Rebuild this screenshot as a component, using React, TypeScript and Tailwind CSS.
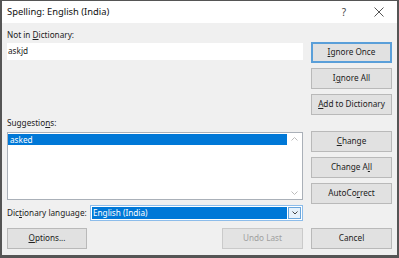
import React from "react";

const font = { fontFamily: '"Noto Sans", "Open Sans", sans-serif' };

function Btn({
  children,
  className = "",
  primary = false,
  disabled = false,
}: {
  children: React.ReactNode;
  className?: string;
  primary?: boolean;
  disabled?: boolean;
}) {
  return (
    <div
      className={
        "h-[21px] flex items-center justify-center text-[8.2px] leading-none whitespace-nowrap " +
        (primary
          ? "bg-[#e1e1e1] border-2 border-[#5a9fd9] text-[#222] "
          : disabled
          ? "bg-[#e3e3e3] border border-[#cacaca] text-[#a0a0a0] "
          : "bg-[#e1e1e1] border border-[#b9b9b9] text-[#222] ") +
        className
      }
    >
      {children}
    </div>
  );
}

export default function App() {
  return (
    <div
      style={font}
      className="w-[399px] h-[258px] border-l-2 border-r-2 border-t border-b-[3px] border-[#555555] flex flex-col text-[#222]"
    >
      {/* Title bar */}
      <div className="h-[22px] bg-white flex items-center pl-[5px] shrink-0">
        <span className="text-[9.4px] leading-none text-[#111] whitespace-nowrap">Spelling: English (India)</span>
        <span className="ml-auto text-[10px] leading-none text-[#444] mr-[28px]">?</span>
        <svg width="10" height="10" viewBox="0 0 10 10" className="mr-[13px]">
          <path d="M0.5 0.5 L9.5 9.5 M9.5 0.5 L0.5 9.5" stroke="#555" strokeWidth="1" />
        </svg>
      </div>

      {/* Body */}
      <div className="flex-1 bg-[#f0f0f0] px-[5px] flex flex-col">
        <div className="flex gap-[8px] h-[198px]">
          {/* Left column */}
          <div className="w-[296px] flex flex-col pt-[6px]">
            <div className="h-[12px] text-[8.2px] leading-[12px] whitespace-nowrap">
              Not in <span className="underline">D</span>ictionary:
            </div>
            <div className="mt-[2px] h-[17px] bg-white text-[8.2px] leading-[15px] pl-[1px]">askjd</div>
            <div className="mt-[57px] h-[12px] text-[8.2px] leading-[12px] whitespace-nowrap">
              Suggestio<span className="underline">n</span>s:
            </div>
            <div className="mt-[3px] h-[68px] bg-white border border-[#aab0b8] flex">
              <div className="flex-1 pt-[1px]">
                <div className="h-[11px] bg-[#0078d7] text-white text-[8.2px] leading-[11px] pl-[2px]">asked</div>
              </div>
              <div className="w-[15px] flex flex-col items-center justify-between py-[4px] bg-white">
                <svg width="7" height="4" viewBox="0 0 7 4">
                  <path d="M0.5 3.5 L3.5 0.5 L6.5 3.5" stroke="#bcbcbc" fill="none" strokeWidth="1" />
                </svg>
                <svg width="7" height="4" viewBox="0 0 7 4">
                  <path d="M0.5 0.5 L3.5 3.5 L6.5 0.5" stroke="#bcbcbc" fill="none" strokeWidth="1" />
                </svg>
              </div>
            </div>
            <div className="mt-[5px] h-[16px] flex items-center">
              <div className="w-[83px] text-[8.2px] leading-none whitespace-nowrap">
                Dic<span className="underline">t</span>ionary language:
              </div>
              <div className="flex-1 h-[16px] bg-white border border-[#8cbcea] flex items-stretch p-[1px]">
                <div className="flex-1 bg-[#0078d7] text-white text-[8.2px] leading-[12px] pl-[1px] whitespace-nowrap">English (India)</div>
                <div className="w-[13px] ml-[1px] bg-[#e5f1fb] border border-[#6aa6dc] flex items-center justify-center">
                  <svg width="6" height="4" viewBox="0 0 6 4">
                    <path d="M0.5 0.5 L3 3 L5.5 0.5" stroke="#444" fill="none" strokeWidth="1" />
                  </svg>
                </div>
              </div>
            </div>
          </div>

          {/* Right column */}
          <div className="w-[81px] flex flex-col pt-[19px]">
            <Btn primary>
              <span className="underline">I</span>gnore Once
            </Btn>
            <Btn className="mt-[5px]">
              I<span className="underline">g</span>nore All
            </Btn>
            <Btn className="mt-[5px]">
              <span className="underline">A</span>dd to Dictionary
            </Btn>
            <Btn className="mt-[16px]">
              <span className="underline">C</span>hange
            </Btn>
            <Btn className="mt-[5px]">
              Change A<span className="underline">l</span>l
            </Btn>
            <Btn className="mt-[5px]">
              AutoCo<span className="underline">r</span>rect
            </Btn>
          </div>
        </div>

        {/* Bottom row */}
        <div className="mt-[7px] flex">
          <Btn className="w-[80px]">
            <span className="underline">O</span>ptions...
          </Btn>
          <Btn disabled className="w-[81px] ml-auto">
            Undo Last
          </Btn>
          <Btn className="w-[81px] ml-[8px]">Cancel</Btn>
        </div>
      </div>
    </div>
  );
}
